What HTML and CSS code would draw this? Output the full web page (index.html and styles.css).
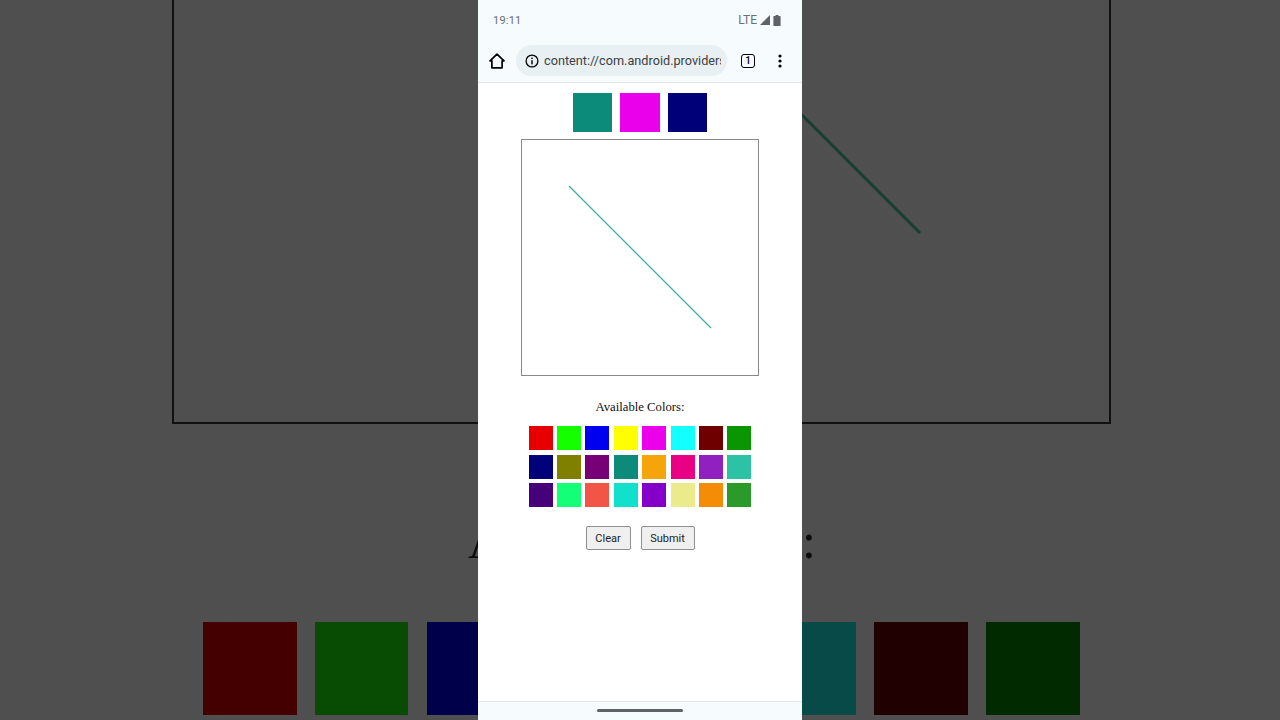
FILE: index.html
```html
<!DOCTYPE html>
<html>
<head>
  <meta charset="utf-8">
  <title>Available Colors</title>
  <link rel="stylesheet" href="styles.css">
</head>
<body>
  <!-- enlarged dark copy of the page behind the phone -->
  <div class="backdrop">
    <div class="backdrop-frame"></div>
    <div class="backdrop-title"><span>A</span><span>:</span></div>
    <div class="backdrop-row">
      <div class="backdrop-swatch bd-red"></div>
      <div class="backdrop-swatch bd-green"></div>
      <div class="backdrop-swatch bd-blue"></div>
      <div class="backdrop-swatch"></div>
      <div class="backdrop-swatch"></div>
      <div class="backdrop-swatch bd-teal"></div>
      <div class="backdrop-swatch bd-maroon"></div>
      <div class="backdrop-swatch bd-forest"></div>
    </div>
    <svg class="backdrop-line" width="1280" height="720" viewBox="0 0 1280 720">
      <line x1="700" y1="13" x2="920" y2="233"></line>
    </svg>
  </div>

  <div class="phone">
    <div class="status-bar">
      <span class="clock">19:11</span>
      <div class="status-icons">
        <span class="network">LTE</span>
        <svg width="10" height="10" viewBox="0 0 10 10"><path class="icon-grey" d="M10 0v10H0z"></path></svg>
        <svg width="8" height="11" viewBox="0 0 8 11"><path class="icon-grey" d="M2.6 0h2.8v1H7a.6.6 0 0 1 .6.6v8.800a.6.6 0 0 1-.6.6H1a.6.6 0 0 1-.6-.6V1.600A.6.6 0 0 1 1 1h1.600z"></path></svg>
      </div>
    </div>

    <div class="toolbar">
      <svg class="home" width="18" height="18" viewBox="0 0 18 18"><path class="icon-line" d="M9 2.200 2 8.800h1.900v7h10.200v-7H16z"></path></svg>
      <div class="omnibox">
        <svg class="info" width="14" height="14" viewBox="0 0 14 14">
          <circle class="icon-thin" cx="7" cy="7" r="5.900"></circle>
          <rect x="6.300" y="6.200" width="1.400" height="4.200"></rect>
          <rect x="6.300" y="3.600" width="1.400" height="1.500"></rect>
        </svg>
        <span class="url">content://com.android.providers</span>
      </div>
      <div class="tab-count">1</div>
      <svg class="menu" width="4" height="14" viewBox="0 0 4 14">
        <circle cx="2" cy="2" r="1.600"></circle>
        <circle cx="2" cy="7" r="1.600"></circle>
        <circle cx="2" cy="12" r="1.600"></circle>
      </svg>
    </div>

    <main class="content">
      <div class="picked">
        <div class="picked-swatch c-teal"></div>
        <div class="picked-swatch c-magenta"></div>
        <div class="picked-swatch c-navy"></div>
      </div>

      <div class="canvas">
        <svg width="236" height="235" viewBox="0 0 236 235">
          <line x1="47" y1="46" x2="189" y2="188"></line>
        </svg>
      </div>

      <p class="palette-title">Available Colors:</p>

      <div class="palette">
        <div class="c-red"></div>
        <div class="c-lime"></div>
        <div class="c-blue"></div>
        <div class="c-yellow"></div>
        <div class="c-magenta"></div>
        <div class="c-cyan"></div>
        <div class="c-maroon"></div>
        <div class="c-green"></div>
        <div class="c-navy"></div>
        <div class="c-olive"></div>
        <div class="c-purple"></div>
        <div class="c-teal"></div>
        <div class="c-orange"></div>
        <div class="c-pink"></div>
        <div class="c-violet"></div>
        <div class="c-jade"></div>
        <div class="c-indigo"></div>
        <div class="c-spring"></div>
        <div class="c-coral"></div>
        <div class="c-turquoise"></div>
        <div class="c-darkviolet"></div>
        <div class="c-khaki"></div>
        <div class="c-amber"></div>
        <div class="c-leaf"></div>
      </div>

      <div class="actions">
        <button class="btn btn-clear">Clear</button>
        <button class="btn btn-submit">Submit</button>
      </div>
    </main>

    <div class="nav-bar">
      <div class="nav-pill"></div>
    </div>
  </div>
</body>
</html>
```

FILE: styles.css
```css
/* page */
body {
  margin: 0;
  height: 720px;
  overflow: hidden;
  background-color: #4f4f4f;
  display: flex;
  justify-content: center;
  font-family: Roboto, Arial, sans-serif;
}

/* dark copy behind the phone */
.backdrop {
  position: absolute;
  top: 0;
  left: 0;
  width: 1280px;
  height: 720px;
  display: flex;
  flex-direction: column;
  filter: blur(0.6px);
}

.backdrop-frame {
  box-sizing: border-box;
  width: 939px;
  height: 424px;
  margin-left: 172px;
  border: 2px solid #111;
  border-top: 0;
}

.backdrop-title {
  width: 348px;
  height: 50px;
  margin: 92px 0 0 468px;
  display: flex;
  justify-content: space-between;
  font-family: "Liberation Serif", serif;
  font-size: 50px;
  line-height: 50px;
  color: #0c0c0c;
}

.backdrop-row {
  display: flex;
  gap: 18.400px;
  margin-top: 56px;
  padding-left: 203px;
}

.backdrop-swatch {
  width: 93.500px;
  height: 93px;
  background-color: #444;
}

.bd-red { background-color: #440000; }
.bd-green { background-color: #084c04; }
.bd-blue { background-color: #00004a; }
.bd-teal { background-color: #084a48; }
.bd-maroon { background-color: #200000; }
.bd-forest { background-color: #012a00; }

.backdrop-line {
  position: absolute;
  top: 0;
  left: 0;
}

.backdrop-line line {
  stroke: #173d33;
  stroke-width: 3;
}

/* phone */
.phone {
  position: relative;
  z-index: 1;
  width: 324px;
  height: 720px;
  background-color: #fff;
  display: flex;
  flex-direction: column;
}

.status-bar {
  height: 40px;
  padding: 0 21px 0 15px;
  background-color: #f6fbfd;
  display: flex;
  justify-content: space-between;
  align-items: center;
  color: #6b6f73;
  font-size: 11px;
}

.clock {
  letter-spacing: 0.2px;
}

.status-icons {
  display: flex;
  align-items: center;
  gap: 3px;
}

.network {
  font-size: 12px;
}

.icon-grey {
  fill: #5f6368;
}

/* toolbar */
.toolbar {
  height: 43px;
  box-sizing: border-box;
  padding: 0 20px 1px 10px;
  background-color: #f6fbfd;
  border-bottom: 1px solid #e3e6e7;
  display: flex;
  align-items: center;
}

.icon-line {
  fill: none;
  stroke: #000;
  stroke-width: 1.700;
  stroke-linejoin: round;
}

.home {
  flex: none;
}

.omnibox {
  flex: none;
  box-sizing: border-box;
  width: 211px;
  height: 31px;
  margin-left: 10px;
  padding: 0 6px 0 9px;
  border-radius: 16px;
  background-color: #e8f0f3;
  display: flex;
  align-items: center;
  gap: 5px;
}

.info {
  flex: none;
}

.icon-thin {
  fill: none;
  stroke: #000;
  stroke-width: 1.300;
}

.url {
  overflow: hidden;
  white-space: nowrap;
  font-size: 12.700px;
  color: #3c4043;
}

.tab-count {
  flex: none;
  box-sizing: border-box;
  width: 14px;
  height: 14px;
  margin-left: 14px;
  border: 1.500px solid #000;
  border-radius: 3px;
  text-align: center;
  font-size: 10px;
  font-weight: 500;
  line-height: 11px;
  color: #000;
}

.menu {
  flex: none;
  margin-left: 23px;
}

/* page content */
.content {
  flex: 1;
  display: flex;
  flex-direction: column;
  align-items: center;
  padding-top: 10px;
}

.picked {
  display: flex;
  gap: 8px;
}

.picked-swatch {
  width: 39.300px;
  height: 39px;
}

.canvas {
  box-sizing: border-box;
  width: 238px;
  height: 237px;
  margin-top: 7px;
  border: 1px solid #8a8a8a;
}

.canvas svg {
  display: block;
}

.canvas line {
  stroke: #3aae9a;
  stroke-width: 1.200;
}

.palette-title {
  margin: 22.500px 0 0;
  font-family: "Liberation Serif", serif;
  font-size: 12.700px;
  line-height: 16px;
  color: #111;
}

.palette {
  display: grid;
  grid-template-columns: repeat(8, 24px);
  grid-auto-rows: 24px;
  gap: 4.600px 4.400px;
  margin-top: 11.700px;
}

.actions {
  display: flex;
  gap: 10px;
  margin-top: 18.800px;
}

.btn {
  box-sizing: border-box;
  height: 24px;
  padding: 0;
  border: 1px solid #8f8f8f;
  border-radius: 2px;
  background-color: #efefef;
  font-family: Roboto, Arial, sans-serif;
  font-size: 11px;
  color: #222;
}

.btn-clear {
  width: 45px;
}

.btn-submit {
  width: 54px;
}

/* gesture bar */
.nav-bar {
  height: 19px;
  box-sizing: border-box;
  background-color: #f6fbfd;
  border-top: 1px solid #e3e6e7;
  display: flex;
  justify-content: center;
  padding-top: 7px;
}

.nav-pill {
  width: 86px;
  height: 3px;
  border-radius: 2px;
  background-color: #5f6368;
}

/* swatch colours */
.c-red { background-color: #e60000; }
.c-lime { background-color: #14ff00; }
.c-blue { background-color: #0000f0; }
.c-yellow { background-color: #ffff00; }
.c-magenta { background-color: #ea00ea; }
.c-cyan { background-color: #14ffff; }
.c-maroon { background-color: #6e0000; }
.c-green { background-color: #0a9600; }
.c-navy { background-color: #000078; }
.c-olive { background-color: #808000; }
.c-purple { background-color: #770077; }
.c-teal { background-color: #0c8a7a; }
.c-orange { background-color: #f5a50a; }
.c-pink { background-color: #ea0085; }
.c-violet { background-color: #9020c0; }
.c-jade { background-color: #2cc3a5; }
.c-indigo { background-color: #46007a; }
.c-spring { background-color: #14ff78; }
.c-coral { background-color: #f25545; }
.c-turquoise { background-color: #10e0cc; }
.c-darkviolet { background-color: #8400c8; }
.c-khaki { background-color: #ebeb8c; }
.c-amber { background-color: #f58c05; }
.c-leaf { background-color: #2a9a2a; }
```
